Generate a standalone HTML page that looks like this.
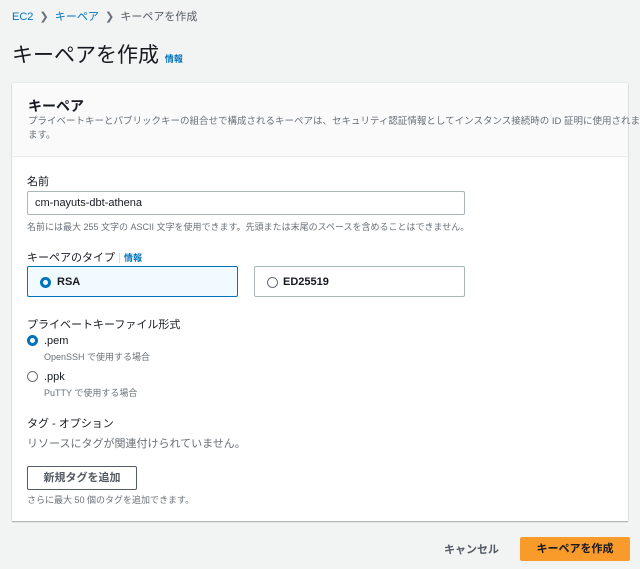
<!DOCTYPE html><html><head><meta charset="utf-8"><style>
*{margin:0;padding:0;box-sizing:border-box}
body{width:640px;height:569px;background:#f2f3f3;font-family:"Liberation Sans","Noto Sans CJK JP",sans-serif;color:#16191f;position:relative;overflow:hidden}
.a{position:absolute;white-space:nowrap}
.blue{color:#0073bb}
.card{position:absolute;left:12px;top:83px;width:616px;height:438px;background:#fff;box-shadow:0 1px 1px rgba(0,28,36,.3),0 0 1px rgba(0,28,36,.2)}
.hd{position:absolute;left:0;top:0;width:616px;height:74px;background:#fafafa;border-bottom:1px solid #eaeded}
.rad{position:absolute;width:11px;height:11px;border-radius:50%;border:1px solid #687078;background:#fff}
.rad.on{border:3px solid #0073bb}
.sm{font-size:9px;color:#687078}
</style></head><body>
<div class="a" style="left:12px;top:8px;font-size:11px;color:#545b64"><span class="blue">EC2</span> &nbsp;<span style="color:#687078">❯</span>&nbsp; <span class="blue">キーペア</span> &nbsp;<span style="color:#687078">❯</span>&nbsp; キーペアを作成</div>
<div class="a" style="left:12px;top:39px;font-size:21px">キーペアを作成 <span class="blue" style="font-size:9px;font-weight:bold">情報</span></div>
<div class="card">
<div class="hd"></div>
<div class="a" style="left:16px;top:13px;font-size:14px;font-weight:bold">キーペア</div>
<div class="a sm" style="left:16px;top:32px;font-size:9.5px;line-height:14px">プライベートキーとパブリックキーの組合せで構成されるキーペアは、セキュリティ認証情報としてインスタンス接続時の ID 証明に使用されま<br>ます。</div>
<div class="a" style="left:15px;top:90px;font-size:11px">名前</div>
<div class="a" style="left:15px;top:108px;width:438px;height:24px;border:1px solid #aab7b8;border-radius:2px;font-size:11px;padding:5px 7px">cm-nayuts-dbt-athena</div>
<div class="a sm" style="left:15px;top:137px">名前には最大 255 文字の ASCII 文字を使用できます。先頭または末尾のスペースを含めることはできません。</div>
<div class="a" style="left:15px;top:166px;font-size:11px">キーペアのタイプ <span style="color:#d5dbdb">|</span> <span class="blue" style="font-size:9px;font-weight:bold">情報</span></div>
<div class="a" style="left:15px;top:183px;width:211px;height:31px;border:1px solid #0073bb;background:#f1faff;border-radius:2px"></div>
<div class="rad on" style="left:28px;top:194px"></div>
<div class="a" style="left:45px;top:193px;font-size:11px;font-weight:bold">RSA</div>
<div class="a" style="left:242px;top:183px;width:211px;height:31px;border:1px solid #aab7b8;border-radius:2px"></div>
<div class="rad" style="left:255px;top:194px"></div>
<div class="a" style="left:271px;top:193px;font-size:11px;font-weight:bold">ED25519</div>
<div class="a" style="left:15px;top:233px;font-size:11px">プライベートキーファイル形式</div>
<div class="rad on" style="left:15px;top:252px"></div>
<div class="a" style="left:32px;top:252px;font-size:11px">.pem</div>
<div class="a sm" style="left:32px;top:267px">OpenSSH で使用する場合</div>
<div class="rad" style="left:15px;top:288px"></div>
<div class="a" style="left:32px;top:288px;font-size:11px">.ppk</div>
<div class="a sm" style="left:32px;top:303px">PuTTY で使用する場合</div>
<div class="a" style="left:15px;top:332px;font-size:11px">タグ - オプション</div>
<div class="a" style="left:15px;top:352px;font-size:11px;color:#687078">リソースにタグが関連付けられていません。</div>
<div class="a" style="left:15px;top:383px;width:110px;height:24px;border:1px solid #545b64;border-radius:2px;font-size:11px;font-weight:bold;color:#545b64;text-align:center;line-height:22px">新規タグを追加</div>
<div class="a sm" style="left:15px;top:410px">さらに最大 50 個のタグを追加できます。</div>
</div>
<div class="a" style="left:444px;top:541px;font-size:11px;font-weight:bold;color:#545b64">キャンセル</div>
<div class="a" style="left:520px;top:537px;width:110px;height:24px;background:#f89b2a;border-radius:2px;font-size:11px;font-weight:bold;text-align:center;line-height:24px">キーペアを作成</div>
</body></html>
